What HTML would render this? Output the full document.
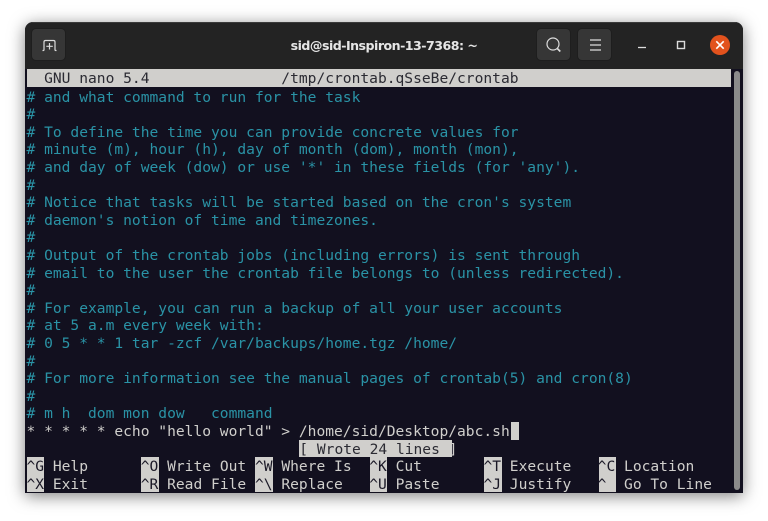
<!DOCTYPE html>
<html><head><meta charset="utf-8">
<style>
html,body{margin:0;padding:0;background:#fff;width:768px;height:521px;overflow:hidden}
#win{position:absolute;left:25px;top:22px;width:718px;height:471px;background:#12101f;border-radius:8px 8px 0 0;box-shadow:0 3px 16px rgba(0,0,0,.5);overflow:hidden}
#tb{position:absolute;left:0;top:0;width:718px;height:46.5px;background:#232323;border-top:1px solid #3a3a3a;box-sizing:border-box}
.btn{position:absolute;top:29px;width:33px;height:31px;background:#363636;border-radius:4px;box-shadow:0 0 0 1px #1e1e1e}
#title{position:absolute;left:250px;width:268px;top:38px;text-align:center;font:bold 12.6px/16px "DejaVu Sans",sans-serif;color:#e6e6e6;letter-spacing:-.52px;white-space:pre}
.r{position:absolute;left:26.5px;height:17.6px;font:14.6px/17.6px "DejaVu Sans Mono",monospace;white-space:pre;color:#d0cfcc;filter:blur(.3px)}
.c{color:#2a93a6}
.hl{position:absolute;background:#d0cfcc;height:17.6px}
.d{color:#1a1826}
#sb{position:absolute;left:734px;top:71px;width:6px;height:419px;background:#8b8b8b;border-radius:3px}
svg{position:absolute;overflow:visible}
</style></head><body>
<div id="win"><div id="tb"></div></div>
<div class="btn" style="left:32px"></div>
<div class="btn" style="left:537px"></div>
<div class="btn" style="left:578px"></div>
<svg style="left:0;top:0" width="768" height="521" fill="none" stroke="#dcdcdc" stroke-width="1.2">
<path d="M42.5 50.5h.8q.7 0 .7-1V42q0-1.500 1.500-1.500h8q1.500 0 1.500 1.500v7.500q0 1 .7 1h.8"/>
<path d="M49.500 43v6.500M46.300 46.300h6.500"/>
<circle cx="553" cy="44" r="6"/><path d="M557.300 48.500l3 3" stroke-width="1.600"/>
<path d="M590 40h11M590 45h11M590 50h11"/>
<path d="M638 47.500h8" stroke-width="1.300"/>
<rect x="677.500" y="41.500" width="7" height="7" stroke-width="1.400"/>
<circle cx="720" cy="45" r="10" fill="#e2521d" stroke="none"/>
<path d="M716.300 41.300l7.400 7.400M723.700 41.300l-7.400 7.400" stroke="#fff" stroke-width="1.600"/>
</svg>
<div id="title">sid@sid-Inspiron-13-7368: ~</div>

<div class="hl" style="left:26.500px;top:69px;width:704px;height:18px"></div>
<div class="r" style="top:70px;color:#2b2b33">  GNU nano 5.4               /tmp/crontab.qSseBe/crontab</div>
<div class="r c" style="top:88.600px"># and what command to run for the task</div>
<div class="r c" style="top:106.200px">#</div>
<div class="r c" style="top:123.800px"># To define the time you can provide concrete values for</div>
<div class="r c" style="top:141.400px"># minute (m), hour (h), day of month (dom), month (mon),</div>
<div class="r c" style="top:159px"># and day of week (dow) or use '*' in these fields (for 'any').</div>
<div class="r c" style="top:176.600px">#</div>
<div class="r c" style="top:194.200px"># Notice that tasks will be started based on the cron's system</div>
<div class="r c" style="top:211.800px"># daemon's notion of time and timezones.</div>
<div class="r c" style="top:229.400px">#</div>
<div class="r c" style="top:247px"># Output of the crontab jobs (including errors) is sent through</div>
<div class="r c" style="top:264.600px"># email to the user the crontab file belongs to (unless redirected).</div>
<div class="r c" style="top:282.200px">#</div>
<div class="r c" style="top:299.800px"># For example, you can run a backup of all your user accounts</div>
<div class="r c" style="top:317.400px"># at 5 a.m every week with:</div>
<div class="r c" style="top:335px"># 0 5 * * 1 tar -zcf /var/backups/home.tgz /home/</div>
<div class="r c" style="top:352.600px">#</div>
<div class="r c" style="top:370.200px"># For more information see the manual pages of crontab(5) and cron(8)</div>
<div class="r c" style="top:387.800px">#</div>
<div class="r c" style="top:405.400px"># m h  dom mon dow   command</div>
<div class="r" style="top:423px">* * * * * echo "hello world" &gt; /home/sid/Desktop/abc.sh</div>
<div class="hl" style="left:510.500px;top:422px;width:8.800px"></div>

<div class="hl" style="left:299.300px;top:439.500px;width:153px"></div>
<div class="r" style="top:440.600px;left:299.300px;color:#2b2b33">[ Wrote 24 lines <span style="color:#d0cfcc">]</span></div>

<div class="hl" style="left:26.500px;top:457px;width:17.600px"></div>
<div class="hl" style="left:141px;top:457px;width:17.600px"></div>
<div class="hl" style="left:255.400px;top:457px;width:17.600px"></div>
<div class="hl" style="left:369.800px;top:457px;width:17.600px"></div>
<div class="hl" style="left:484.200px;top:457px;width:17.600px"></div>
<div class="hl" style="left:598.600px;top:457px;width:17.600px"></div>
<div class="hl" style="left:26.500px;top:474.600px;width:17.600px"></div>
<div class="hl" style="left:141px;top:474.600px;width:17.600px"></div>
<div class="hl" style="left:255.400px;top:474.600px;width:17.600px"></div>
<div class="hl" style="left:369.800px;top:474.600px;width:17.600px"></div>
<div class="hl" style="left:484.200px;top:474.600px;width:17.600px"></div>
<div class="hl" style="left:598.600px;top:474.600px;width:17.600px"></div>

<div class="r" style="top:458.200px"><span class="d">^G</span> Help      <span class="d">^O</span> Write Out <span class="d">^W</span> Where Is  <span class="d">^K</span> Cut       <span class="d">^T</span> Execute   <span class="d">^C</span> Location</div>
<div class="r" style="top:475.800px"><span class="d">^X</span> Exit      <span class="d">^R</span> Read File <span class="d">^\</span> Replace   <span class="d">^U</span> Paste     <span class="d">^J</span> Justify   <span class="d">^_</span> Go To Line</div>
<div id="sb"></div>
</body></html>
